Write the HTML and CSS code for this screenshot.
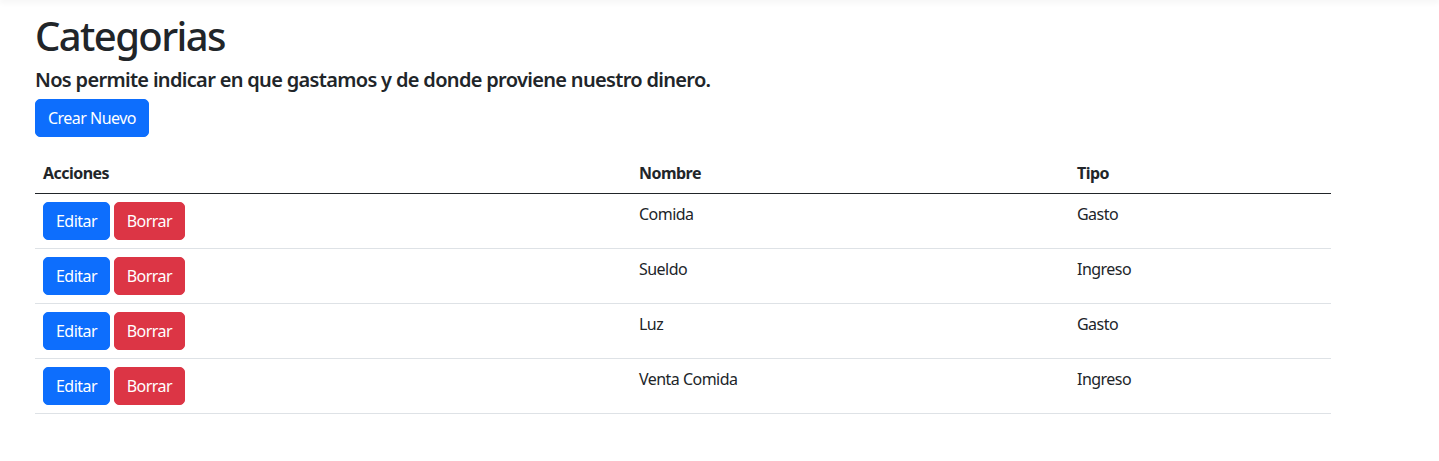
FILE: index.html
```html
<!DOCTYPE html>
<html lang="es">
<head>
<meta charset="utf-8">
<title>Categorias</title>
<link rel="stylesheet" href="styles.css">
</head>
<body>
<div class="topshadow"></div>
<main class="container">
  <h1 class="title">Categorias</h1>
  <h5 class="subtitle">Nos permite indicar en que gastamos y de donde proviene nuestro dinero.</h5>
  <p class="actions"><a class="btn btn-primary" href="#">Crear Nuevo</a></p>
  <table class="table">
    <thead>
      <tr>
        <th class="col-acciones">Acciones</th>
        <th class="col-nombre">Nombre</th>
        <th class="col-tipo">Tipo</th>
      </tr>
    </thead>
    <tbody>
      <tr>
        <td><a class="btn btn-primary" href="#">Editar</a> <a class="btn btn-danger" href="#">Borrar</a></td>
        <td>Comida</td>
        <td>Gasto</td>
      </tr>
      <tr>
        <td><a class="btn btn-primary" href="#">Editar</a> <a class="btn btn-danger" href="#">Borrar</a></td>
        <td>Sueldo</td>
        <td>Ingreso</td>
      </tr>
      <tr>
        <td><a class="btn btn-primary" href="#">Editar</a> <a class="btn btn-danger" href="#">Borrar</a></td>
        <td>Luz</td>
        <td>Gasto</td>
      </tr>
      <tr>
        <td><a class="btn btn-primary" href="#">Editar</a> <a class="btn btn-danger" href="#">Borrar</a></td>
        <td>Venta Comida</td>
        <td>Ingreso</td>
      </tr>
    </tbody>
  </table>
</main>
</body>
</html>
```

FILE: styles.css
```css
* { box-sizing: border-box; }

body {
  margin: 0;
  background: #fff;
  color: #212529;
  font-family: "Noto Sans", "Open Sans", sans-serif;
  font-size: 16px;
  line-height: 1.5;
  letter-spacing: -0.033em;
}

.topshadow {
  height: 0;
  box-shadow: 0 0 6px 1px rgba(0, 0, 0, 0.12);
}

.container {
  width: 1296px;
  margin-left: 35px;
  padding-top: 12px;
}

.title {
  margin: 0 0 8px;
  font-size: 40px;
  font-weight: 500;
  line-height: 1.2;
  letter-spacing: -0.04em;
}

.subtitle {
  margin: 0 0 7px;
  font-size: 20px;
  font-weight: 600;
  line-height: 1.2;
  letter-spacing: -0.034em;
}

.actions {
  margin: 0 0 16px;
}

.btn {
  display: inline-block;
  padding: 6px 12px;
  border: 1px solid transparent;
  border-radius: 5px;
  font-size: 16px;
  line-height: 24px;
  color: #fff;
  text-decoration: none;
  vertical-align: middle;
}

.btn-primary {
  background: #0d6efd;
  border-color: #0d6efd;
}

.btn-danger {
  background: #dc3545;
  border-color: #dc3545;
}

.table {
  width: 100%;
  border-collapse: collapse;
  margin-bottom: 16px;
}

.table th,
.table td {
  padding: 8px;
  text-align: left;
  vertical-align: top;
  border-bottom: 1px solid #dee2e6;
}

.table thead th {
  font-weight: 700;
  vertical-align: bottom;
  border-bottom: 1px solid #212529;
}

.col-acciones { width: 596px; }
.col-nombre { width: 438px; }
.col-tipo { width: 262px; }
```
